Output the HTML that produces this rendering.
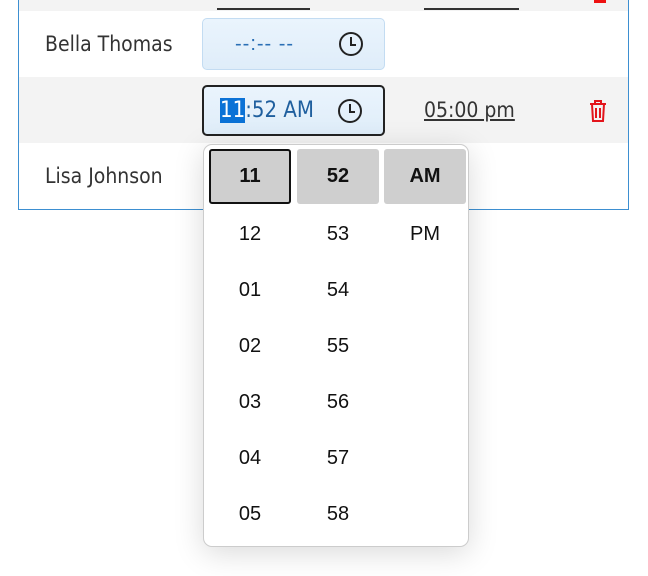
<!DOCTYPE html>
<html><head><style>
body{margin:0;width:648px;height:576px;background:#fff;font-family:"Liberation Sans",sans-serif;position:relative;overflow:hidden}
.box{position:absolute;left:18px;top:-2px;width:609px;height:211px;border:1px solid #3d8fd1;border-top:none}
.row{position:absolute;left:19px;width:609px}
.name{position:absolute;left:45px;font-size:21px;color:#333;font-family:"DejaVu Sans Condensed","Liberation Sans",sans-serif}
.inp{position:absolute;left:202px;width:183px;border-radius:5px;background:linear-gradient(#eaf4fd,#dfedf9);box-sizing:border-box}
.clk{position:absolute;right:20px;top:50%;margin-top:-13px}
.dd{position:absolute;left:203px;top:144px;width:266px;height:403px;background:#fff;border:1px solid #ccc;border-radius:9px;box-shadow:0 6px 30px rgba(0,0,0,.15);box-sizing:border-box}
.c{position:absolute;width:82px;height:55px;line-height:59px;text-align:center;font-size:20px;color:#111}
.sel{background:#cfcfcf;font-weight:bold;border-radius:3px;line-height:55px}
</style></head><body>
<div class="row" style="top:0;height:11px;background:#f3f3f3"></div>
<div class="row" style="top:77px;height:66px;background:#f3f3f3"></div>
<div class="box"></div>
<div style="position:absolute;left:217px;top:8px;width:93px;height:2px;background:#333"></div>
<div style="position:absolute;left:424px;top:8px;width:95px;height:2px;background:#333"></div>
<div style="position:absolute;left:594px;top:0;width:12px;height:3px;background:#e11"></div>

<div class="name" style="top:32px">Bella Thomas</div>
<div class="name" style="top:164px">Lisa Johnson</div>

<div class="inp" style="top:18px;height:52px;border:1px solid #c3dcf2">
<span style="position:absolute;left:32px;top:14px;font-size:20px;color:#2a6fb5;letter-spacing:1px">--:-- --</span>
<svg class="clk" width="26" height="26" viewBox="0 0 26 26"><circle cx="13" cy="13" r="11" fill="none" stroke="#222" stroke-width="2"/><path d="M13 6v8h5" fill="none" stroke="#222" stroke-width="2"/></svg>
</div>
<div class="inp" style="top:85px;height:51px;border:2px solid #222">
<span style="position:absolute;left:16px;top:11px;font-size:22px;color:#1f5f9e;font-family:'DejaVu Sans Condensed',sans-serif"><span style="background:#0b72d6;color:#fff">11</span>:52 AM</span>
<svg class="clk" width="26" height="26" viewBox="0 0 26 26"><circle cx="13" cy="13" r="11" fill="none" stroke="#222" stroke-width="2"/><path d="M13 6v8h5" fill="none" stroke="#222" stroke-width="2"/></svg>
</div>
<div style="position:absolute;left:424px;top:98px;font-size:21px;color:#333;text-decoration:underline;font-family:'DejaVu Sans Condensed',sans-serif">05:00 pm</div>
<svg style="position:absolute;left:588px;top:99px" width="20" height="24" viewBox="0 0 20 24"><path d="M2 5h16M7 5V2h6v3M4 5l1 17h10l1-17M8 9v10M12 9v10" fill="none" stroke="#e3141b" stroke-width="2"/></svg>

<div class="dd">
<div class="c sel" style="left:5px;top:4px;border:2px solid #111;box-sizing:border-box;width:82px;line-height:51px">11</div>
<div class="c sel" style="left:93px;top:4px">52</div>
<div class="c sel" style="left:180px;top:4px">AM</div>
<div class="c" style="left:5px;top:60px">12</div><div class="c" style="left:93px;top:60px">53</div><div class="c" style="left:180px;top:60px">PM</div>
<div class="c" style="left:5px;top:116px">01</div><div class="c" style="left:93px;top:116px">54</div>
<div class="c" style="left:5px;top:172px">02</div><div class="c" style="left:93px;top:172px">55</div>
<div class="c" style="left:5px;top:228px">03</div><div class="c" style="left:93px;top:228px">56</div>
<div class="c" style="left:5px;top:284px">04</div><div class="c" style="left:93px;top:284px">57</div>
<div class="c" style="left:5px;top:340px">05</div><div class="c" style="left:93px;top:340px">58</div>
</div>
</body></html>
